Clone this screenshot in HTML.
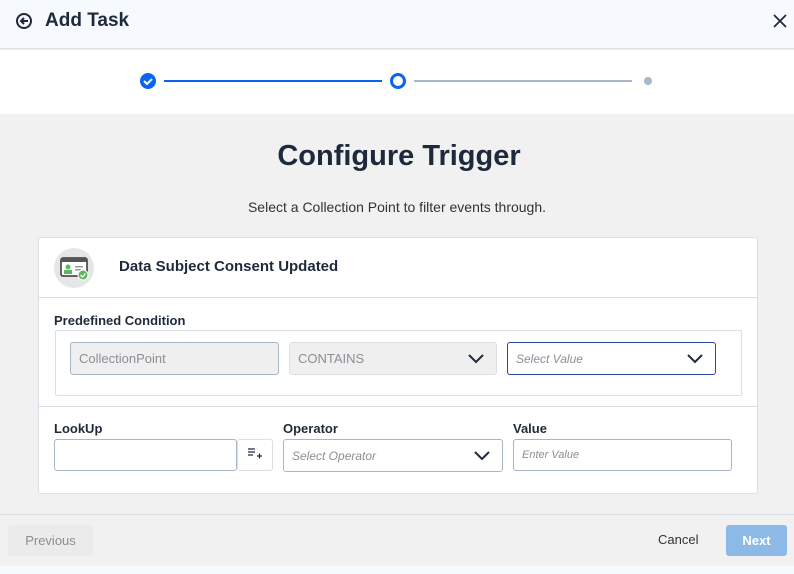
<!DOCTYPE html><html><head><style>
*{box-sizing:border-box;margin:0;padding:0}
body{width:794px;height:574px;position:relative;overflow:hidden;font-family:"Liberation Sans",sans-serif;background:#f1f1f1;color:#1e2a3b}
.a{position:absolute}
.inp{position:absolute;border:1px solid #a9b6c9;border-radius:3px;background:#fff;font-size:13px;color:#8a8f96;padding-left:8px;display:flex;align-items:center}
.lbl{position:absolute;font-size:13px;font-weight:bold;color:#1e2a3b}
.chev{position:absolute;right:12px;top:50%;margin-top:-5px}
</style></head><body>
<div class="a" style="left:0;top:0;width:794px;height:49px;background:#f6f9fd;border-bottom:1px solid #dcdfe5"></div>
<svg class="a" style="left:15px;top:12px" width="18" height="18" viewBox="0 0 18 18"><circle cx="9" cy="9" r="7" fill="none" stroke="#1e2a3b" stroke-width="2"/><path d="M13 9H6M9 6L6 9L9 12" fill="none" stroke="#1e2a3b" stroke-width="2"/></svg>
<div class="a" style="left:45px;top:10px;font-size:19px;font-weight:bold">Add Task</div>
<svg class="a" style="left:772px;top:13px" width="16" height="16"><path d="M2 2L14 14M14 2L2 14" stroke="#1e2a3b" stroke-width="1.8"/></svg>
<div class="a" style="left:0;top:50px;width:794px;height:64px;background:#fff"></div>
<svg class="a" style="left:138px;top:72px" width="520" height="20"><circle cx="10" cy="9" r="8" fill="#0a64f0"/><path d="M6 9l3 3 5-5" fill="none" stroke="#fff" stroke-width="2"/><line x1="26" y1="9" x2="244" y2="9" stroke="#0a64f0" stroke-width="2"/><circle cx="260" cy="9" r="6.5" fill="#fff" stroke="#0a64f0" stroke-width="3"/><line x1="276" y1="9" x2="494" y2="9" stroke="#a9b6c9" stroke-width="2"/><circle cx="510" cy="9" r="4" fill="#a9b6c9"/></svg>
<div class="a" style="left:0;top:140px;width:798px;text-align:center;font-size:29px;font-weight:bold">Configure Trigger</div>
<div class="a" style="left:0;top:199px;width:794px;text-align:center;font-size:14px;color:#333">Select a Collection Point to filter events through.</div>
<div class="a" style="left:38px;top:237px;width:720px;height:257px;background:#fff;border:1px solid #dcdfe5;border-radius:3px"></div>
<div class="a" style="left:39px;top:297px;width:718px;height:1px;background:#dcdfe5"></div>
<div class="a" style="left:54px;top:248px;width:40px;height:40px;border-radius:50%;background:#e6e6e6"></div>
<svg class="a" style="left:60px;top:257px" width="30" height="24"><rect x="1" y="1" width="26" height="18" rx="2" fill="#fff" stroke="#333" stroke-width="1.5"/><rect x="1" y="1" width="26" height="4" fill="#555"/><circle cx="8" cy="10" r="2.5" fill="#5cb85c"/><rect x="4" y="13" width="8" height="4" fill="#5cb85c"/><rect x="15" y="9" width="8" height="1.5" fill="#999"/><rect x="15" y="12" width="6" height="1.5" fill="#999"/><circle cx="23" cy="18" r="5" fill="#5cb85c" stroke="#fff"/><path d="M20.5 18l2 2 3-3.5" fill="none" stroke="#fff" stroke-width="1.3"/></svg>
<div class="a" style="left:119px;top:258px;font-size:15px;font-weight:bold">Data Subject Consent Updated</div>
<div class="lbl" style="left:54px;top:313px">Predefined Condition</div>
<div class="a" style="left:55px;top:330px;width:687px;height:66px;border:1px solid #dcdfe5;border-radius:2px"></div>
<div class="inp" style="left:70px;top:342px;width:209px;height:33px;background:#efefef">CollectionPoint</div>
<div class="inp" style="left:289px;top:342px;width:208px;height:33px;background:#efefef;border-color:#dcdfe5">CONTAINS<svg class="chev" width="16" height="10"><path d="M1 1l7 7 7-7" fill="none" stroke="#1e2a3b" stroke-width="2"/></svg></div>
<div class="inp" style="left:507px;top:342px;width:209px;height:33px;border-color:#2a4b9b;font-style:italic;font-size:12px">Select Value<svg class="chev" width="16" height="10"><path d="M1 1l7 7 7-7" fill="none" stroke="#1e2a3b" stroke-width="2"/></svg></div>
<div class="a" style="left:39px;top:406px;width:718px;height:1px;background:#dcdfe5"></div>
<div class="lbl" style="left:54px;top:421px">LookUp</div>
<div class="lbl" style="left:283px;top:421px">Operator</div>
<div class="lbl" style="left:513px;top:421px">Value</div>
<div class="inp" style="left:54px;top:439px;width:183px;height:32px"></div>
<div class="a" style="left:237px;top:439px;width:36px;height:32px;border:1px solid #dcdfe5;border-radius:3px;background:#fff"></div>
<svg class="a" style="left:248px;top:448px" width="14" height="12"><path d="M0 1h7M0 4h7M0 7h5M9 8h5M11.5 5.5v5" stroke="#1e2a3b" stroke-width="1.2"/></svg>
<div class="inp" style="left:283px;top:439px;width:220px;height:33px;font-style:italic;font-size:12px">Select Operator<svg class="chev" width="16" height="10"><path d="M1 1l7 7 7-7" fill="none" stroke="#1e2a3b" stroke-width="2"/></svg></div>
<div class="inp" style="left:513px;top:439px;width:219px;height:32px;font-style:italic;font-size:11px">Enter Value</div>
<div class="a" style="left:0;top:514px;width:794px;height:1px;background:#dcdfe5"></div>
<div class="a" style="left:8px;top:525px;width:85px;height:31px;background:#ebebeb;border-radius:2px;font-size:13px;color:#8a8f96;display:flex;align-items:center;justify-content:center">Previous</div>
<div class="a" style="left:658px;top:532px;font-size:13px;color:#333">Cancel</div>
<div class="a" style="left:726px;top:525px;width:61px;height:31px;background:#8cb9e6;border-radius:3px;font-size:13px;color:#fff;display:flex;align-items:center;justify-content:center;font-weight:bold">Next</div>
<div class="a" style="left:0;top:566px;width:794px;height:8px;background:#f6f9fd"></div>
</body></html>
